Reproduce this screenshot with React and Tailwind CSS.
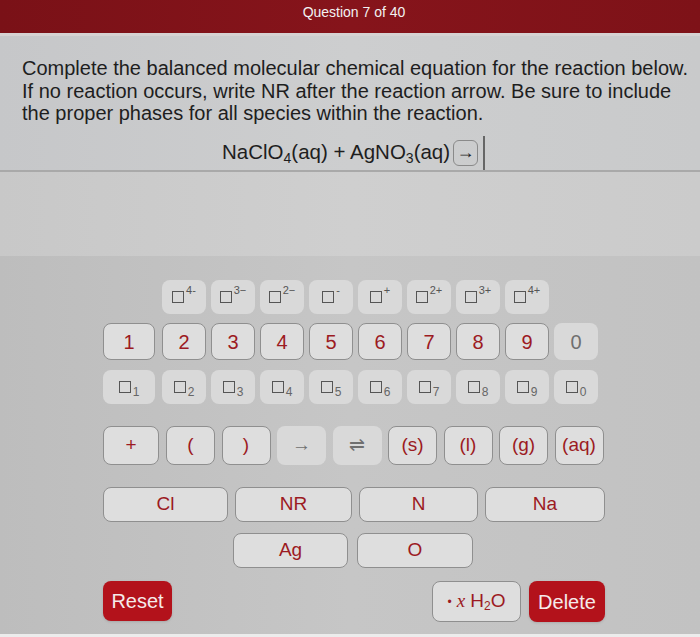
import React from "react";

const font = { fontFamily: '"Liberation Sans", Arial, sans-serif' };

function Key({ w, h = "h-[36px]", active = true, bordered = true, className = "", children }) {
  return (
    <div
      className={`flex shrink-0 items-center justify-center rounded-[8px] ${h} ${w} ${
        bordered ? "border border-[#8f8f8f] bg-[#dedede]" : "border border-transparent bg-[#d9d9d9]"
      } ${active ? "text-[#9c1a22]" : "text-[#6f6f6f]"} ${className}`}
    >
      {children}
    </div>
  );
}

function Box() {
  return <span className="inline-block h-[12px] w-[12px] border border-[#555]" />;
}

function Charge({ label }) {
  return (
    <span className="flex items-start">
      <Box />
      <span className="-mt-[6px] ml-[2px] text-[11px] leading-none text-[#555]">{label}</span>
    </span>
  );
}

function Sub({ label }) {
  return (
    <span className="flex items-end">
      <Box />
      <span className="-mb-[5px] ml-[2px] text-[12px] leading-none text-[#666]">{label}</span>
    </span>
  );
}

export default function App() {
  const charges = ["4-", "3−", "2−", "-", "+", "2+", "3+", "4+"];
  const digits = ["2", "3", "4", "5", "6", "7", "8", "9"];
  const subs = ["2", "3", "4", "5", "6", "7", "8", "9"];

  return (
    <div className="h-[637px] w-[700px] overflow-hidden bg-[#c4c4c4]" style={font}>
      <header className="flex h-[33px] items-start justify-center bg-gradient-to-r from-[#7a1117] via-[#86141b] to-[#7e1218] pt-[2px] text-[14px] text-[#f2f2f2]">
        <span className="ml-[8px]">Question 7 of 40</span>
      </header>
      <div className="h-[3px] bg-[#d6d2d2]" />

      <section className="h-[136px] border-b-2 border-[#a9a9a9] bg-gradient-to-r from-[#c6c7c9] via-[#cdcecf] to-[#c9cacb] pl-[22px] pt-[21px] text-[#1e1e1e]">
        <p className="text-[20px] leading-[22.5px]">
          Complete the balanced molecular chemical equation for the reaction below.
          <br />
          If no reaction occurs, write NR after the reaction arrow. Be sure to include
          <br />
          the proper phases for all species within the reaction.
        </p>
        <div className="mt-[11px] flex items-center pl-[200px] text-[20.5px]">
          <span>
            NaClO<sub className="text-[14px]">4</sub>(aq) + AgNO<sub className="text-[14px]">3</sub>(aq)
          </span>
          <span className="ml-[3px] flex h-[26px] w-[25px] items-center justify-center rounded-[6px] border border-[#8a8a8a] text-[18px]">
            →
          </span>
          <span className="ml-[5px] h-[34px] w-[1.5px] bg-[#666]" />
        </div>
      </section>

      <div className="h-[84px] bg-gradient-to-r from-[#c8c8c8] via-[#cfcfcf] to-[#cbcbcb]" />

      <section className="flex flex-col bg-gradient-to-r from-[#bdbdbd] via-[#c6c6c6] to-[#c2c2c2] pl-[103px] pt-[24px]">
        <div className="ml-[59px] flex gap-[5px]">
          {charges.map((c) => (
            <Key key={c} w="w-[44px]" h="h-[34px]" bordered={false}>
              <Charge label={c} />
            </Key>
          ))}
        </div>

        <div className="mt-[9px] flex text-[20px]">
          <Key w="w-[52px]" h="h-[37px]">1</Key>
          <div className="ml-[7px] flex gap-[5px]">
            {digits.map((d) => (
              <Key key={d} w="w-[44px]" h="h-[37px]">{d}</Key>
            ))}
            <Key w="w-[44px]" h="h-[37px]" bordered={false} active={false}>0</Key>
          </div>
        </div>

        <div className="mt-[10px] flex">
          <Key w="w-[52px]" h="h-[34px]" bordered={false}>
            <Sub label="1" />
          </Key>
          <div className="ml-[7px] flex gap-[5px]">
            {subs.map((s) => (
              <Key key={s} w="w-[44px]" h="h-[34px]" bordered={false}>
                <Sub label={s} />
              </Key>
            ))}
            <Key w="w-[44px]" h="h-[34px]" bordered={false}>
              <Sub label="0" />
            </Key>
          </div>
        </div>

        <div className="mt-[22px] flex text-[19px]">
          <Key w="w-[56px]" h="h-[39px]">+</Key>
          <div className="ml-[7px] flex gap-[6.5px]">
            <Key w="w-[49px]" h="h-[39px]">(</Key>
            <Key w="w-[49px]" h="h-[39px]">)</Key>
            <Key w="w-[49px]" h="h-[39px]" bordered={false} active={false}>→</Key>
            <Key w="w-[49px]" h="h-[39px]" bordered={false} active={false}>⇌</Key>
            <Key w="w-[49px]" h="h-[39px]">(s)</Key>
            <Key w="w-[49px]" h="h-[39px]">(l)</Key>
            <Key w="w-[49px]" h="h-[39px]">(g)</Key>
            <Key w="w-[49px]" h="h-[39px]">(aq)</Key>
          </div>
        </div>

        <div className="mt-[22px] flex gap-[7px] text-[19px]">
          <Key w="w-[125px]" h="h-[35px]">Cl</Key>
          <Key w="w-[117px]" h="h-[35px]">NR</Key>
          <Key w="w-[119px]" h="h-[35px]">N</Key>
          <Key w="w-[120px]" h="h-[35px]">Na</Key>
        </div>

        <div className="ml-[130px] mt-[11px] flex gap-[9px] text-[19px]">
          <Key w="w-[115px]" h="h-[35px]">Ag</Key>
          <Key w="w-[116px]" h="h-[35px]">O</Key>
        </div>

        <div className="mt-[13px] flex h-[53px] items-start">
          <div className="flex h-[40px] w-[69px] items-center justify-center rounded-[8px] bg-[#b3121b] text-[20px] text-[#f5eaea] shadow-sm">
            Reset
          </div>
          <div className="ml-auto mr-[95px] flex gap-[8px]">
            <Key w="w-[89px]" h="h-[41px]" className="text-[19px]">
              <span className="mr-[5px] text-[12px]">•</span>
              <span className="mr-[5px] italic" style={{ fontFamily: '"Liberation Serif", serif' }}>x</span>
              <span>
                H<sub className="text-[12px]">2</sub>O
              </span>
            </Key>
            <div className="flex h-[41px] w-[76px] items-center justify-center rounded-[8px] bg-[#b3121b] text-[20px] text-[#f5eaea] shadow-sm">
              Delete
            </div>
          </div>
        </div>
        <div className="-ml-[103px] h-[10px] bg-[#ececec]" />
      </section>
    </div>
  );
}
